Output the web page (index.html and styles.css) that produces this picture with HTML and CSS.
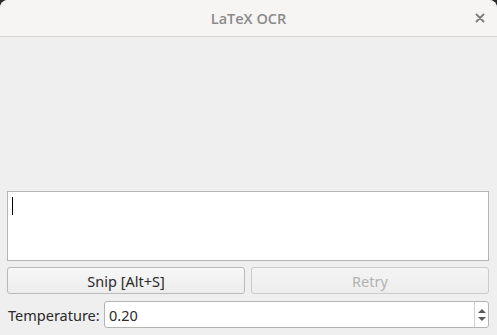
FILE: index.html
```html
<!DOCTYPE html>
<html>
<head>
<meta charset="utf-8">
<link rel="stylesheet" href="styles.css">
</head>
<body>
<div class="window">
  <div class="titlebar">
    <span class="title">LaTeX OCR</span>
    <span class="close">
      <svg width="10" height="10" viewBox="0 0 10 10"><path d="M1.5 1.5 L8.5 8.5 M8.5 1.5 L1.5 8.5" stroke="#7b7b7b" stroke-width="1.8" stroke-linecap="round"/></svg>
    </span>
  </div>
  <div class="content">
    <div class="image-area"></div>
    <div class="textbox"><span class="caret"></span></div>
    <div class="buttons">
      <div class="btn">Snip [Alt+S]</div>
      <div class="btn disabled">Retry</div>
    </div>
    <div class="temp-row">
      <span class="label">Temperature:</span>
      <div class="spinbox">
        <span class="value">0.20</span>
        <div class="spin">
          <span class="up"></span>
          <span class="down"></span>
        </div>
      </div>
    </div>
  </div>
</div>
</body>
</html>
```
FILE: styles.css
```css
html, body {
  margin: 0;
  padding: 0;
  background: #2b2b2b;
  width: 497px;
  height: 335px;
  overflow: hidden;
}
.window {
  width: 497px;
  height: 335px;
  background: #efefef;
  border-radius: 8px 8px 0 0;
  overflow: hidden;
  display: flex;
  flex-direction: column;
  font-family: "Noto Sans", "DejaVu Sans", sans-serif;
  font-size: 14.5px;
  color: #2a2a2a;
}
.titlebar {
  height: 36px;
  flex: none;
  background: #f6f5f4;
  border-bottom: 1px solid #d8d4d0;
  display: flex;
  align-items: center;
  justify-content: center;
  position: relative;
}
.title {
  font-family: "Open Sans", "Noto Sans", sans-serif;
  font-weight: 600;
  font-size: 14.5px;
  color: #8a8a8a;
}
.close {
  position: absolute;
  right: 12px;
  top: 13px;
  width: 10px;
  height: 10px;
  display: flex;
}
.content {
  flex: 1;
  display: flex;
  flex-direction: column;
  padding: 0 8px 7px 7px;
}
.image-area {
  flex: 1;
}
.textbox {
  height: 68px;
  background: #ffffff;
  border: 1px solid #b4b4b4;
  position: relative;
}
.caret {
  position: absolute;
  left: 4px;
  top: 5px;
  width: 1px;
  height: 18px;
  background: #000;
}
.buttons {
  display: flex;
  gap: 6px;
  margin-top: 6px;
}
.btn {
  flex: 1;
  height: 25px;
  border: 1px solid #b9b9b9;
  border-radius: 3px;
  background: linear-gradient(#f7f7f7, #ececec);
  display: flex;
  align-items: center;
  justify-content: center;
  color: #2a2a2a;
}
.btn.disabled {
  color: #b2b2b2;
  border-color: #cccccc;
  background: linear-gradient(#f4f4f4, #ededed);
}
.temp-row {
  display: flex;
  align-items: center;
  margin-top: 7px;
  gap: 5px;
}
.label {
  width: 92px;
  padding-left: 1px;
  box-sizing: border-box;
  white-space: nowrap;
}
.spinbox {
  flex: 1;
  height: 25px;
  border: 1px solid #b4b4b4;
  border-radius: 3px;
  background: #fff;
  display: flex;
  align-items: center;
}
.value {
  flex: 1;
  padding-left: 4px;
}
.spin {
  width: 13px;
  height: 25px;
  border-left: 1px solid #cfcfcf;
  display: flex;
  flex-direction: column;
  align-items: center;
  justify-content: center;
  gap: 4px;
}
.up {
  width: 0;
  height: 0;
  border-left: 4px solid transparent;
  border-right: 4px solid transparent;
  border-bottom: 4px solid #5a5a5a;
}
.down {
  width: 0;
  height: 0;
  border-left: 4px solid transparent;
  border-right: 4px solid transparent;
  border-top: 4px solid #5a5a5a;
}
```
